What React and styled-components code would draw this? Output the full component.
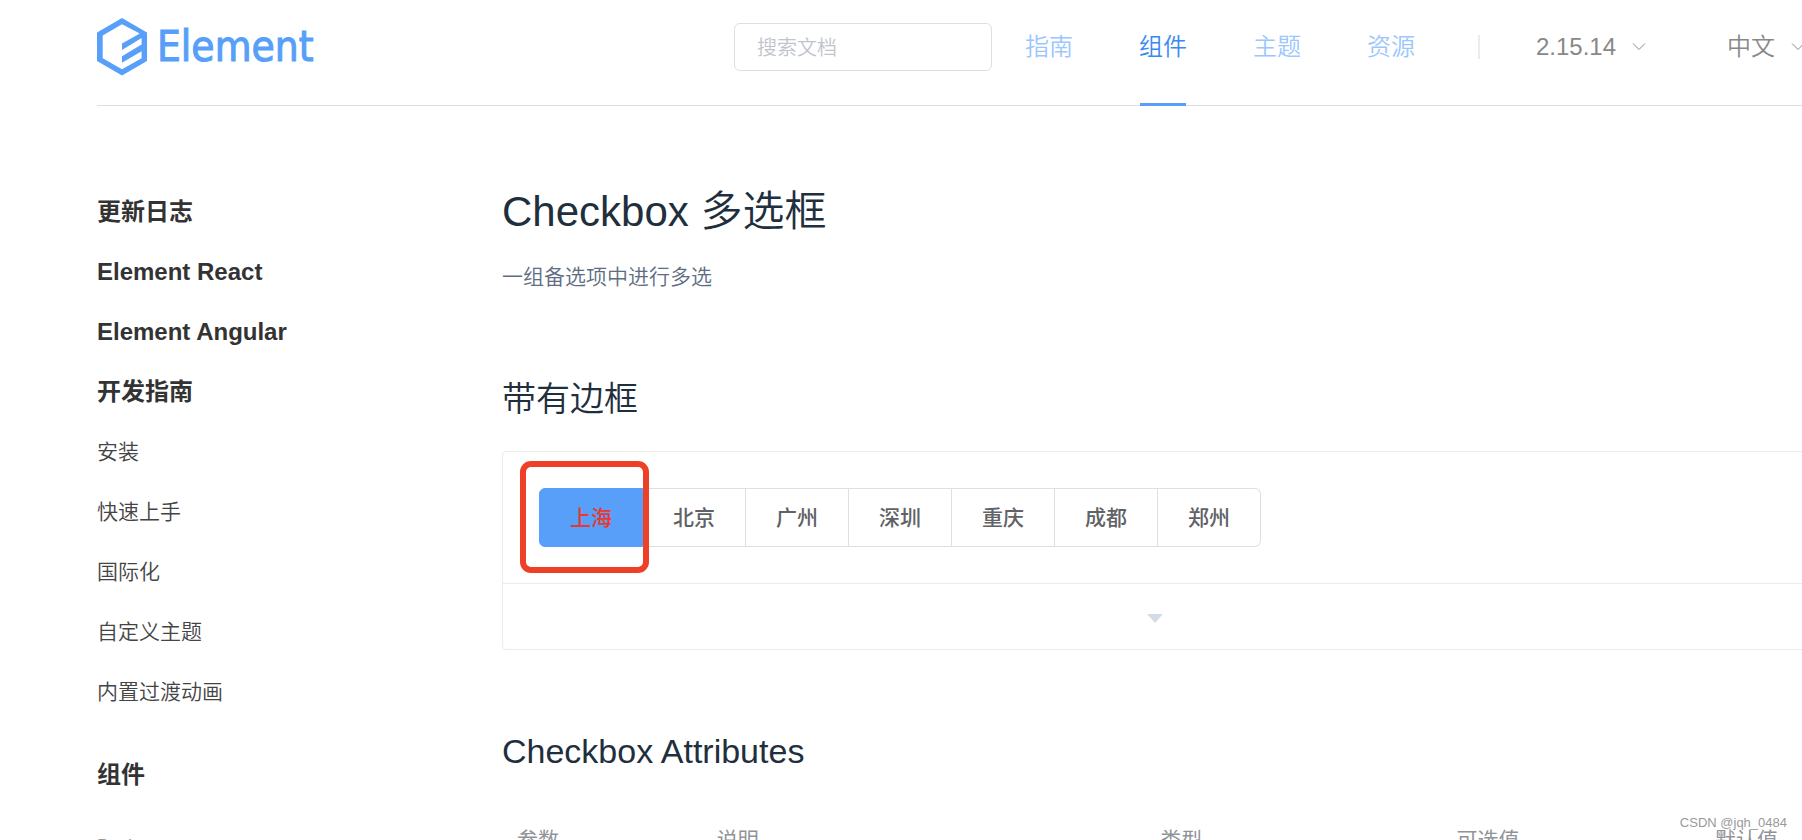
import React, { useState } from 'react';
import styled, { createGlobalStyle } from 'styled-components';

const GlobalStyle = createGlobalStyle`
  *, *::before, *::after {
    box-sizing: border-box;
  }
  body {
    margin: 0;
    background: #fff;
    font-family: "Liberation Sans", "Noto Sans CJK SC", sans-serif;
    font-weight: 350;
    color: #333;
  }
  a {
    color: inherit;
    text-decoration: none;
  }
  h1, h2, p, ul {
    margin: 0;
    padding: 0;
    font-weight: inherit;
  }
`;

const Page = styled.div`
  position: relative;
  height: 100vh;
  overflow: hidden;
`;

const Container = styled.div`
  margin: 0 -5px 0 97px;
`;

const Header = styled.header`
  display: flex;
  height: 106px;
  padding: 0 2px 11px 0;
  border-bottom: 1px solid #dcdfe6;
  align-items: center;
`;

const Logo = styled.a`
  display: flex;
  align-items: center;
  gap: 10px;
  margin-right: auto;
  color: #579ff8;
  font-family: "DejaVu Sans Condensed", "DejaVu Sans", sans-serif;
  font-size: 42px;
  font-weight: 400;
  line-height: 60px;
  -webkit-text-stroke: 1px #579ff8;
`;

const SearchInput = styled.input`
  width: 258px;
  height: 48px;
  padding: 2px 22px 0;
  border: 1px solid #dcdfe6;
  border-radius: 6px;
  font: inherit;
  font-size: 20px;
  outline: none;
  &::placeholder {
    color: #c0c4cc;
    opacity: 1;
  }
`;

const Nav = styled.nav`
  display: flex;
`;

const NavLink = styled.a`
  position: relative;
  margin: 0 33px;
  font-size: 24px;
  line-height: 58px;
  color: ${props => (props.$active ? '#3989f2' : '#9cc6fe')};
  &::after {
    content: "";
    display: ${props => (props.$active ? 'block' : 'none')};
    position: absolute;
    left: 1px;
    right: 1px;
    bottom: -30px;
    height: 3px;
    background: #579ff8;
  }
`;

const Separator = styled.span`
  width: 2px;
  height: 24px;
  margin: 0 56px 0 30px;
  background: #ebebeb;
`;

const Dropdown = styled.button`
  display: flex;
  align-items: center;
  gap: 16px;
  padding: 0;
  border: 0;
  background: none;
  font: inherit;
  font-size: 24px;
  line-height: 58px;
  color: #888;
  cursor: pointer;
  & + & {
    margin-left: 81px;
  }
`;

const Body = styled.div`
  display: flex;
  padding-top: 76px;
`;

const Sidebar = styled.nav`
  flex: 0 0 405px;
  ul {
    list-style: none;
  }
`;

const SideItem = styled.li`
  margin-top: ${props => (props.$gap ? '23px' : '0')};
  font-size: ${props => (props.$title ? '24px' : '21px')};
  font-weight: ${props => (props.$title ? 700 : 'inherit')};
  line-height: 60px;
  color: ${props => (props.$title ? '#333' : '#444')};
`;

const SideGroup = styled.li`
  margin-top: 22px;
  font-size: 18px;
  line-height: 39px;
  color: #999;
`;

const Content = styled.main`
  flex: 1;
  min-width: 0;
`;

const Title = styled.h1`
  font-size: 42px;
  line-height: 60px;
  color: #1f2f3d;
`;

const Description = styled.p`
  margin-top: 19px;
  font-size: 21px;
  line-height: 32px;
  color: #5e6d82;
`;

const SectionTitle = styled.h2`
  margin-top: ${props => props.$top}px;
  font-size: 34px;
  line-height: 44px;
  color: #1f2f3d;
`;

const DemoBlock = styled.section`
  margin-top: 30px;
  border: 1px solid #ebebeb;
  border-radius: 4px;
`;

const Source = styled.div`
  position: relative;
  padding: 36px;
`;

const CheckboxGroup = styled.div`
  display: flex;
`;

const CheckboxButton = styled.label`
  height: 59px;
  padding: 0 30px;
  border: 1px solid #dcdfe6;
  border-left-width: 0;
  font-size: 21px;
  font-weight: 500;
  line-height: 57px;
  color: #606266;
  cursor: pointer;
  &:first-child {
    border-left-width: 1px;
    border-radius: 6px 0 0 6px;
  }
  &:last-child {
    border-radius: 0 6px 6px 0;
  }
  &:has(input:checked) {
    border-color: #579ff8;
    background: #579ff8;
    color: #e8382f;
  }
  input {
    position: absolute;
    opacity: 0;
    margin: 0;
  }
`;

const Highlight = styled.div`
  position: absolute;
  left: 17px;
  top: 9px;
  width: 129px;
  height: 112px;
  border: 6px solid #ed4026;
  border-radius: 11px;
  pointer-events: none;
`;

const DemoControl = styled.button`
  display: flex;
  width: 100%;
  height: 66px;
  padding: 4px 0 0;
  border: 0;
  border-top: 1px solid #e8ebf2;
  background: none;
  align-items: center;
  justify-content: center;
`;

const AttrTable = styled.table`
  width: 100%;
  margin-top: 32px;
  border-collapse: collapse;
  table-layout: fixed;
  th {
    padding: 20px 15px;
    font-size: 21px;
    font-weight: 400;
    line-height: 30px;
    text-align: left;
    white-space: nowrap;
    color: #909399;
  }
`;

const Watermark = styled.div`
  position: absolute;
  right: 15px;
  bottom: 8px;
  font-size: 13px;
  line-height: 18px;
  color: #999;
`;

const navItems = ['指南', '组件', '主题', '资源'];

const sideItems = [
  { name: '更新日志', title: true },
  { name: 'Element React', title: true },
  { name: 'Element Angular', title: true },
  { name: '开发指南', title: true },
  { name: '安装' },
  { name: '快速上手' },
  { name: '国际化' },
  { name: '自定义主题' },
  { name: '内置过渡动画' },
  { name: '组件', title: true, gap: true },
];

const cities = ['上海', '北京', '广州', '深圳', '重庆', '成都', '郑州'];

const columns = [
  { name: '参数', width: '15.3%' },
  { name: '说明', width: '34%' },
  { name: '类型', width: '22.7%' },
  { name: '可选值', width: '19.8%' },
  { name: '默认值', width: '8.2%' },
];

function LogoMark() {
  return (
    <svg width="50" height="58" viewBox="0 0 50 58" aria-hidden="true">
      <path
        fill="#579ff8"
        fillRule="evenodd"
        d="M25 0L50 14.5V43L25 57.5L0 43V14.5ZM25 6.3L5.7 17.5V40.2L25 51.3L44.6 40.2V33.2L25 44.8V38.3L44.6 26.4V20L25 32V25.5L42.8 15.6Z"
      />
    </svg>
  );
}

function Chevron() {
  return (
    <svg width="14" height="8" viewBox="0 0 14 8" fill="none" stroke="#888" aria-hidden="true">
      <path d="M1 0.5L7 6.5L13 0.5" />
    </svg>
  );
}

function App() {
  const [active, setActive] = useState('组件');
  const [checked, setChecked] = useState(['上海']);

  const toggle = (city) => {
    setChecked(checked.includes(city) ? checked.filter(c => c !== city) : [...checked, city]);
  };

  return (
    <Page>
      <GlobalStyle />
      <Container>
        <Header>
          <Logo href="#"><LogoMark />Element</Logo>
          <SearchInput type="text" placeholder="搜索文档" aria-label="搜索文档" />
          <Nav>
            {navItems.map(item => (
              <NavLink key={item} href="#" $active={active === item} onClick={() => setActive(item)}>{item}</NavLink>
            ))}
          </Nav>
          <Separator />
          <Dropdown type="button">2.15.14<Chevron /></Dropdown>
          <Dropdown type="button">中文<Chevron /></Dropdown>
        </Header>
        <Body>
          <Sidebar>
            <ul>
              {sideItems.map(item => (
                <SideItem key={item.name} $title={item.title} $gap={item.gap}><a href="#">{item.name}</a></SideItem>
              ))}
              <SideGroup>Basic</SideGroup>
            </ul>
          </Sidebar>
          <Content>
            <Title>Checkbox 多选框</Title>
            <Description>一组备选项中进行多选</Description>
            <SectionTitle $top={84}>带有边框</SectionTitle>
            <DemoBlock>
              <Source>
                <CheckboxGroup>
                  {cities.map(city => (
                    <CheckboxButton key={city}>
                      <input type="checkbox" checked={checked.includes(city)} onChange={() => toggle(city)} />
                      {city}
                    </CheckboxButton>
                  ))}
                </CheckboxGroup>
                <Highlight />
              </Source>
              <DemoControl type="button" aria-label="展开">
                <svg width="16" height="9" viewBox="0 0 16 9"><path fill="#d3dce6" d="M0 0H16L8 9Z" /></svg>
              </DemoControl>
            </DemoBlock>
            <SectionTitle $top={79}>Checkbox Attributes</SectionTitle>
            <AttrTable>
              <colgroup>
                {columns.map(col => <col key={col.name} style={{ width: col.width }} />)}
              </colgroup>
              <thead>
                <tr>
                  {columns.map(col => <th key={col.name}>{col.name}</th>)}
                </tr>
              </thead>
            </AttrTable>
          </Content>
        </Body>
      </Container>
      <Watermark>CSDN @jqh_0484</Watermark>
    </Page>
  );
}

export default App;
